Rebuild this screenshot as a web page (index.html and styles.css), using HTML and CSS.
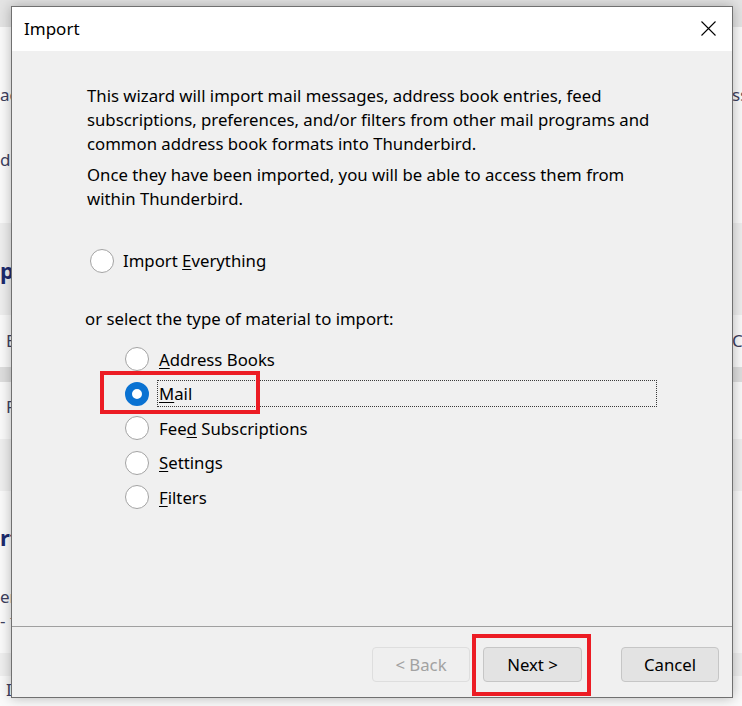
FILE: index.html
```html
<!DOCTYPE html>
<html lang="en">
<head>
<meta charset="utf-8">
<title>Import</title>
<link rel="stylesheet" href="styles.css">
</head>
<body>
<div class="backdrop">
  <div class="band band-toolbar"></div>
  <div class="band band-b">
    <div class="bg-line"><span class="l">ad</span><span class="r">ss</span></div>
    <div class="bg-line gap-41"><span class="l">d</span><span class="r"></span></div>
  </div>
  <div class="band band-c">
    <div class="bg-line bold"><span class="l">p</span><span class="r"></span></div>
  </div>
  <div class="band band-d">
    <div class="bg-line"><span class="l in6">E</span><span class="r">Ch</span></div>
  </div>
  <div class="band band-e"></div>
  <div class="band band-f">
    <div class="bg-line"><span class="l in6">F</span><span class="r"></span></div>
  </div>
  <div class="band band-g"></div>
  <div class="band band-h">
    <div class="bg-line bold"><span class="l">rt</span><span class="r"></span></div>
    <div class="bg-line gap-34"><span class="l">er</span><span class="r"></span></div>
    <div class="bg-line tight"><span class="l">- f</span><span class="r"></span></div>
  </div>
  <div class="band band-i"></div>
  <div class="band band-j">
    <div class="bg-line"><span class="l in6">I</span><span class="r"></span></div>
  </div>
</div>

<div class="dialog">
  <div class="titlebar">
    <span class="title">Import</span>
    <svg class="close" width="15" height="15" viewBox="0 0 15 15" aria-hidden="true">
      <path d="M0.5 0.5 L14.5 14.5 M14.5 0.5 L0.5 14.5" stroke="#000" stroke-width="1.1" fill="none"/>
    </svg>
  </div>
  <div class="content">
    <p class="intro">This wizard will import mail messages, address book entries, feed<br>subscriptions, preferences, and/or filters from other mail programs and<br>common address book formats into Thunderbird.</p>
    <p class="intro second">Once they have been imported, you will be able to access them from<br>within Thunderbird.</p>
    <div class="everything"><span class="radio"></span><span class="ev-label">Import <u>E</u>verything</span></div>
    <p class="prompt">or select the type of material to import:</p>
    <div class="radio-list">
      <div class="option"><span class="radio"></span><span class="label"><u>A</u>ddress Books</span></div>
      <div class="option"><span class="radio checked"></span><span class="label focused"><u>M</u>ail</span><span class="highlight hl-mail"></span></div>
      <div class="option"><span class="radio"></span><span class="label">Fee<u>d</u> Subscriptions</span></div>
      <div class="option"><span class="radio"></span><span class="label"><u>S</u>ettings</span></div>
      <div class="option"><span class="radio"></span><span class="label"><u>F</u>ilters</span></div>
    </div>
  </div>
  <div class="footer">
    <button class="btn back" disabled>&lt; Back</button>
    <button class="btn next">Next &gt;<span class="highlight hl-next"></span></button>
    <button class="btn cancel">Cancel</button>
  </div>
</div>
</body>
</html>
```

FILE: styles.css
```css
* { box-sizing: border-box; }

html, body {
  margin: 0;
  padding: 0;
}

body {
  width: 742px;
  height: 706px;
  overflow: hidden;
  position: relative;
  background: #fafafa;
  font-family: "Noto Sans", "Open Sans", sans-serif;
}

/* ---------- page behind the dialog ---------- */
.backdrop {
  display: flex;
  flex-direction: column;
  height: 706px;
  color: #3e3f5e;
  font-size: 17px;
}

.band { display: flex; flex-direction: column; flex: none; }
.band-toolbar { height: 27px; background: #e4e4e4; }
.band-b { height: 196px; padding-top: 56px; background: #fafafa; }
.band-c { height: 92px; padding-top: 33px; background: #eeeeee; }
.band-d { height: 52px; padding-top: 14px; background: #fafafa; }
.band-e { height: 15px; background: #dedede; }
.band-f { height: 57px; padding-top: 13px; background: #fafafa; }
.band-g { height: 52px; background: #efefef; }
.band-h { height: 162px; padding-top: 32px; background: #fafafa; }
.band-i { height: 23px; background: #efefef; }
.band-j { flex: 1; padding-top: 2px; background: #fafafa; }

.bg-line {
  display: flex;
  justify-content: space-between;
  height: 24px;
  line-height: 24px;
  white-space: nowrap;
}
.bg-line.bold {
  height: 28px;
  line-height: 28px;
  font-size: 22px;
  font-weight: 700;
  color: #1c2a6e;
}
.gap-41 { margin-top: 41px; }
.gap-34 { margin-top: 34px; }
.bg-line .l { padding-left: 0; }
.bg-line .in6 { padding-left: 6px; }
.bg-line .r { width: 10px; }

/* ---------- dialog window ---------- */
.dialog {
  position: absolute;
  left: 11px;
  top: 6px;
  width: 722px;
  height: 692px;
  border: 1px solid #707070;
  background: #f0f0f0;
  box-shadow: 0 0 12px rgba(0, 0, 0, 0.28);
  display: flex;
  flex-direction: column;
  color: #000;
  font-size: 16.75px;
}

.titlebar {
  height: 44px;
  flex: none;
  background: #ffffff;
  display: flex;
  align-items: center;
  justify-content: space-between;
  padding: 0 16px 0 12px;
}
.title { font-size: 17px; line-height: 24px; }
.close { display: block; margin-top: -1px; }

.content {
  flex: 1;
  padding: 33px 0 0 75px;
}

.intro {
  margin: 0;
  line-height: 24px;
}
.intro.second { margin-top: 7px; }

.everything {
  margin-top: 38px;
  height: 24px;
  padding-left: 3px;
  display: flex;
  align-items: center;
  gap: 9px;
}
.ev-label { line-height: 24px; }

.prompt {
  margin: 34px 0 0 -2px;
  line-height: 24px;
}

.radio-list {
  margin-top: 14.5px;
  display: flex;
  flex-direction: column;
  gap: 7.5px;
}

.option {
  position: relative;
  height: 27px;
  padding-left: 38px;
  display: flex;
  align-items: center;
}

.radio {
  flex: none;
  width: 24px;
  height: 24px;
  border-radius: 50%;
  border: 1px solid #a3a3a3;
  background: #ffffff;
}
.radio.checked {
  border: 7px solid #0a72d2;
  background: #ffffff;
}

.label {
  margin-left: 8px;
  width: 500px;
  height: 27px;
  line-height: 25px;
  padding-left: 1px;
  border: 1px dotted transparent;
}
.label.focused { border-color: #3a3a3a; }

u {
  text-decoration-thickness: 1px;
  text-underline-offset: 2px;
}

/* ---------- red annotation boxes ---------- */
.highlight {
  position: absolute;
  border: 4px solid #ec1c24;
  pointer-events: none;
}
.hl-mail {
  left: 13px;
  top: -9px;
  width: 160px;
  height: 43px;
}
.hl-next {
  left: -12px;
  top: -14px;
  width: 119px;
  height: 62px;
}

/* ---------- footer ---------- */
.footer {
  flex: none;
  height: 71px;
  border-top: 1px solid #a0a0a0;
  padding: 20px 13px 14px 0;
  display: flex;
  justify-content: flex-end;
  align-items: flex-start;
}

.btn {
  position: relative;
  width: 98px;
  height: 35px;
  border: 1px solid #c6c6c6;
  border-radius: 4px;
  background: #e3e3e3;
  font-family: "Noto Sans", "Open Sans", sans-serif;
  font-size: 16.75px;
  color: #000;
  padding: 0;
  line-height: 33px;
}
.btn.back {
  background: #efefef;
  border-color: #dedede;
  color: #a2a2a2;
}
.btn.next { width: 99px; margin-left: 13px; }
.btn.cancel { margin-left: 39px; }
```
